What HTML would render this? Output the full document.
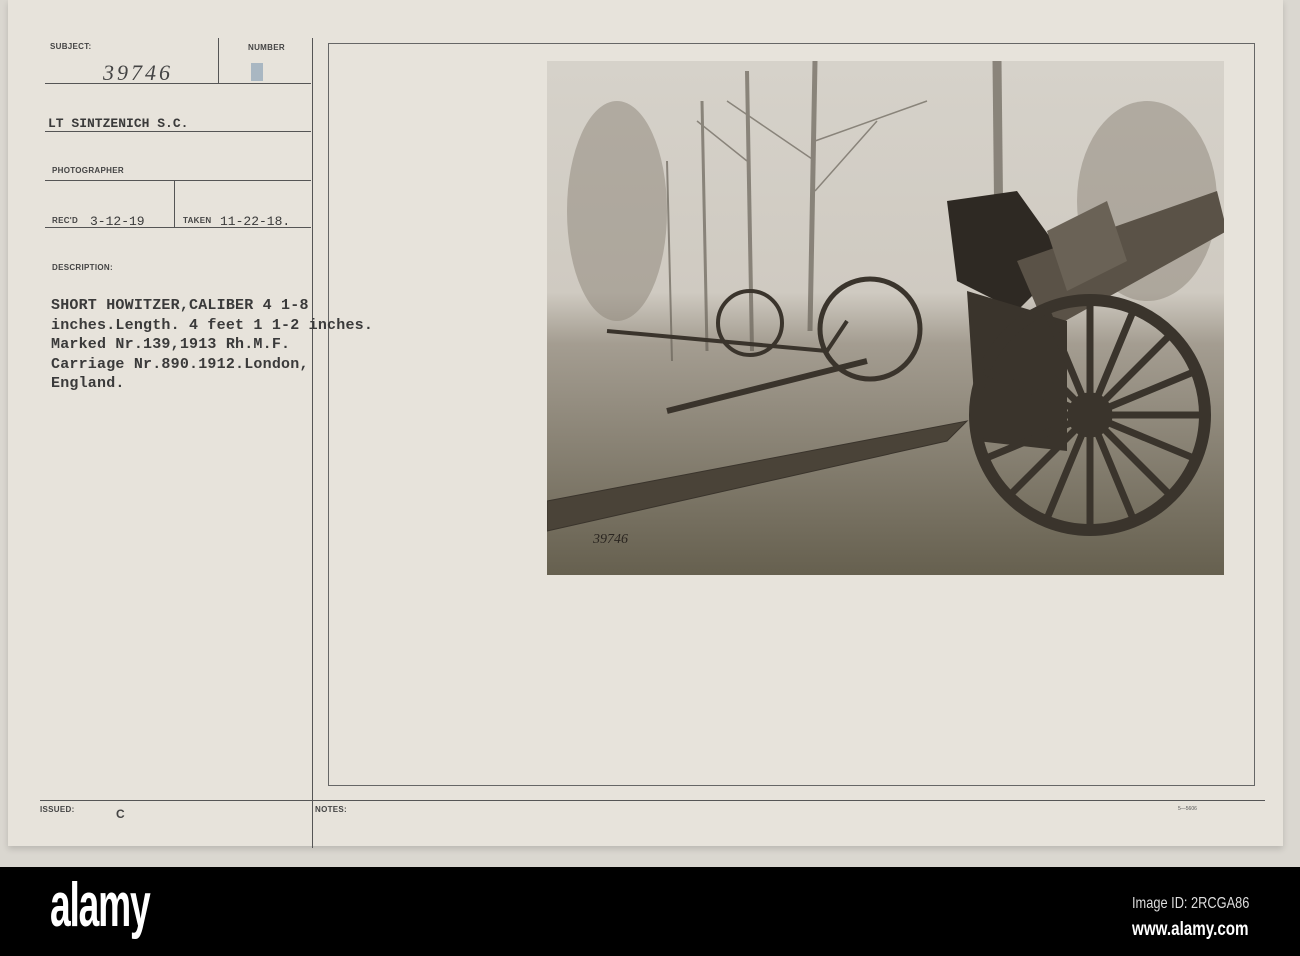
<!DOCTYPE html>
<html><head><meta charset="utf-8"><style>
*{margin:0;padding:0}
body{width:1300px;height:956px;background:#dad7d0;position:relative;overflow:hidden;font-family:"Liberation Sans",sans-serif}
.card{position:absolute;left:8px;top:0;width:1275px;height:846px;background:#e7e3db;box-shadow:0 3px 6px rgba(0,0,0,.15)}
.l{position:absolute;background:#555}
.t{position:absolute;color:#333;white-space:nowrap}
.lab{font-size:8px;font-weight:bold;letter-spacing:.3px;color:#444}
.mono{font-family:"Liberation Mono",monospace;color:#3a3a3a;font-weight:bold}
.foot{position:absolute;left:0;top:867px;width:1300px;height:89px;background:#000}
</style></head><body>
<div class="card"></div>
<div class="l" style="left:312px;top:38px;width:1px;height:810px"></div>
<div class="l" style="left:218px;top:38px;width:1px;height:45px"></div>
<div class="l" style="left:45px;top:83px;width:266px;height:1px"></div>
<div class="l" style="left:45px;top:131px;width:266px;height:1px"></div>
<div class="l" style="left:45px;top:180px;width:266px;height:1px"></div>
<div class="l" style="left:174px;top:180px;width:1px;height:47px"></div>
<div class="l" style="left:45px;top:227px;width:266px;height:1px"></div>
<div style="position:absolute;left:328px;top:43px;width:925px;height:741px;border:1px solid #666"></div>
<div class="l" style="left:40px;top:800px;width:1225px;height:1px"></div>
<div class="t lab" style="left:50px;top:42px">SUBJECT:</div>
<div class="t" style="left:103px;top:60px;font-size:22px;font-family:'Liberation Serif',serif;font-style:italic;color:#444;letter-spacing:3px">39746</div>
<div class="t lab" style="left:248px;top:43px">NUMBER</div>
<div style="position:absolute;left:251px;top:63px;width:12px;height:18px;background:#a9b7c2"></div>
<div class="t mono" style="left:48px;top:116px;font-size:13px">LT SINTZENICH S.C.</div>
<div class="t lab" style="left:52px;top:166px">PHOTOGRAPHER</div>
<div class="t lab" style="left:52px;top:216px">REC'D</div>
<div class="t mono" style="left:90px;top:214px;font-size:13px;font-weight:normal">3-12-19</div>
<div class="t lab" style="left:183px;top:216px">TAKEN</div>
<div class="t mono" style="left:220px;top:214px;font-size:13px;font-weight:normal">11-22-18.</div>
<div class="t lab" style="left:52px;top:263px">DESCRIPTION:</div>
<div class="t mono" style="left:51px;top:296px;font-size:15px;line-height:19.6px;letter-spacing:.2px">SHORT HOWITZER,CALIBER 4 1-8<br>inches.Length. 4 feet 1 1-2 inches.<br>Marked Nr.139,1913 Rh.M.F.<br>Carriage Nr.890.1912.London,<br>England.</div>
<div class="t lab" style="left:40px;top:805px">ISSUED:</div>
<div class="t" style="left:116px;top:807px;font-size:12px;font-weight:bold;color:#444">C</div>
<div class="t lab" style="left:315px;top:805px">NOTES:</div>
<div class="t" style="left:1178px;top:806px;font-size:5px;color:#555">5—5606</div>
<svg style="position:absolute;left:547px;top:61px" width="677" height="514" viewBox="0 0 677 514">
<defs><linearGradient id="g" x1="0" y1="0" x2="0" y2="1">
<stop offset="0" stop-color="#d6d2ca"/><stop offset=".45" stop-color="#cfcac1"/><stop offset=".55" stop-color="#a49d91"/><stop offset="1" stop-color="#66604f"/></linearGradient></defs>
<rect width="677" height="514" fill="url(#g)"/>
<g stroke="#6a645a" fill="none" opacity=".7">
<path d="M450 0 L452 185" stroke-width="9"/><path d="M268 0 L263 270" stroke-width="5"/><path d="M200 10 L205 290" stroke-width="4"/>
<path d="M155 40 L160 290" stroke-width="3"/><path d="M120 100 L125 300" stroke-width="2"/>
<path d="M268 100 L180 40 M268 130 L330 60 M200 100 L150 60 M268 80 L380 40" stroke-width="1.5"/>
</g>
<g fill="#8c8477" opacity=".5"><ellipse cx="70" cy="150" rx="50" ry="110"/><ellipse cx="600" cy="140" rx="70" ry="100"/></g>
<g stroke="#3a342c" fill="none">
<path d="M0 470 L400 380 L420 360 L0 440 Z" fill="#4a4338"/>
<path d="M60 270 L280 290 L300 260" stroke-width="4"/>
<circle cx="203" cy="262" r="32" stroke-width="4"/>
<circle cx="323" cy="268" r="50" stroke-width="5"/>
<path d="M120 350 L320 300" stroke-width="6"/>
</g>
<path d="M400 140 L470 130 L520 200 L470 250 L410 220 Z" fill="#2e2923"/>
<path d="M470 200 L670 130 L680 170 L500 270 Z" fill="#5a5247"/>
<path d="M500 170 L560 140 L580 200 L520 230 Z" fill="#6a6256"/>
<path d="M420 230 L520 260 L520 390 L430 380 Z" fill="#3a342c"/>
<g stroke="#3a342c" fill="none">
<circle cx="543" cy="354" r="115" stroke-width="12"/>
<g stroke-width="7">
<path d="M543 239 L543 469 M428 354 L658 354 M462 273 L624 435 M624 273 L462 435 M499 248 L587 460 M587 248 L499 460 M437 310 L649 398 M437 398 L649 310"/>
</g>
<circle cx="543" cy="354" r="22" fill="#3a342c"/>
</g>
<text x="46" y="482" font-family="Liberation Serif,serif" font-style="italic" font-size="14" fill="#2a2520">39746</text>
</svg>
<div class="foot"></div>
<div class="t" style="left:50px;top:870px;font-size:62px;font-weight:bold;color:#fff;transform:scaleX(.6);transform-origin:left top;letter-spacing:-2px">alamy</div>
<div class="t" style="left:1132px;top:895px;font-size:16px;color:#ddd;transform:scaleX(.8);transform-origin:left top">Image ID: 2RCGA86</div>
<div class="t" style="left:1132px;top:919px;font-size:19px;font-weight:bold;color:#fff;transform:scaleX(.8);transform-origin:left top">www.alamy.com</div>
</body></html>
